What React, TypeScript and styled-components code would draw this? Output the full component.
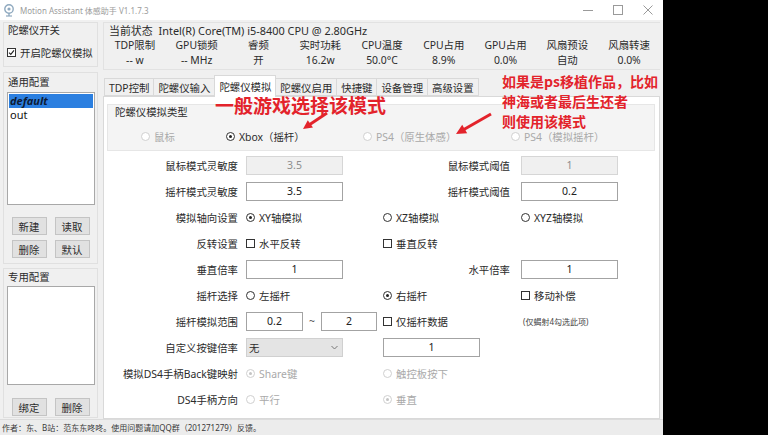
import React from 'react';
import styled, { createGlobalStyle } from 'styled-components';

const FONT = `"Noto Sans", "Noto Sans CJK SC", sans-serif`;

const Global = createGlobalStyle`
  html, body { margin: 0; padding: 0; background: #000; }
  body { font-family: ${FONT}; }
  * { box-sizing: border-box; }
`;

const Screen = styled.div`
  width: 768px;
  height: 435px;
  background: #000;
  display: flex;
  overflow: hidden;
`;

const Window = styled.div`
  position: relative;
  width: 663px;
  height: 435px;
  background: #f0f0f0;
  display: flex;
  flex-direction: column;
  font-family: ${FONT};
  font-size: 10.4px;
  color: #2b2b2b;
`;

const TitleBar = styled.div`
  height: 20px;
  flex-shrink: 0;
  background: #fff;
  display: flex;
  align-items: center;
  padding-left: 3px;
`;

const TitleText = styled.span`
  margin-left: 5px;
  font-size: 8px;
  color: #9c9c9c;
`;

const Controls = styled.div`
  margin-left: auto;
  display: flex;
`;

const CtrlBtn = styled.div`
  width: 30px;
  height: 20px;
  display: flex;
  align-items: center;
  justify-content: center;
`;

const Body = styled.div`
  flex: 1;
  min-height: 0;
  display: flex;
  gap: 5px;
  padding: 2px 3px 0 3px;
`;

const LeftCol = styled.div`
  width: 95px;
  flex-shrink: 0;
  display: flex;
  flex-direction: column;
`;

const Group = styled.div<{ $h: number; $mt: number }>`
  height: ${(p) => p.$h}px;
  margin-top: ${(p) => p.$mt}px;
  border: 1px solid #e0e0e0;
  display: flex;
  flex-direction: column;
`;

const GroupTitle = styled.div<{ $mt: number }>`
  margin-top: ${(p) => p.$mt}px;
  padding-left: 4px;
  line-height: 14px;
  height: 14px;
`;

const CheckRow = styled.div`
  margin-top: 7px;
  height: 16px;
  padding-left: 3px;
  display: flex;
  align-items: center;
`;

const ListBox = styled.div<{ $mt: number; $h: number }>`
  margin: ${(p) => p.$mt}px 0 0 3px;
  width: 88px;
  height: ${(p) => p.$h}px;
  background: #fff;
  border: 1px solid #a8a8a8;
  padding: 1px;
  font-size: 11px;
  color: #111;
`;

const ListItem = styled.div<{ $sel?: boolean }>`
  height: 14px;
  line-height: 14px;
  padding-left: 1px;
  background: ${(p) => (p.$sel ? '#2b7fe0' : 'transparent')};
  font-weight: ${(p) => (p.$sel ? 700 : 400)};
  font-style: ${(p) => (p.$sel ? 'italic' : 'normal')};
  color: ${(p) => (p.$sel ? '#0d1a33' : '#111')};
`;

const ButtonGrid = styled.div<{ $mt: number }>`
  margin-top: ${(p) => p.$mt}px;
  display: grid;
  grid-template-columns: 35px 35px;
  column-gap: 8px;
  row-gap: 5px;
  justify-content: center;
`;

const Btn = styled.div`
  height: 18px;
  background: #e1e1e1;
  border: 1px solid #c4c4c4;
  display: flex;
  align-items: center;
  justify-content: center;
`;

const RightCol = styled.div`
  flex: 1;
  min-width: 0;
  display: flex;
  flex-direction: column;
`;

const StatusBox = styled.div`
  height: 48px;
  border: 1px solid #e2e2e2;
  border-right: none;
  display: flex;
  flex-direction: column;
`;

const CpuLine = styled.div`
  height: 15px;
  line-height: 15px;
  padding-left: 5px;
  display: flex;
  gap: 6px;
  font-size: 10.9px;
`;

const StatGrid = styled.div`
  display: grid;
  grid-template-columns: repeat(9, 1fr);
  grid-auto-rows: 15px;
  line-height: 15px;
  text-align: center;
`;

const TabBar = styled.div`
  position: relative;
  z-index: 1;
  margin-top: 5px;
  height: 21px;
  display: flex;
  align-items: flex-end;
  padding-left: 2px;
`;

const Tab = styled.div<{ $sel?: boolean }>`
  height: ${(p) => (p.$sel ? 22 : 18)}px;
  margin-bottom: ${(p) => (p.$sel ? -1 : 0)}px;
  margin-left: -1px;
  padding: 0 4px;
  display: flex;
  align-items: center;
  padding-top: ${(p) => (p.$sel ? 0 : 1)}px;
  background: ${(p) => (p.$sel ? '#fff' : '#f0f0f0')};
  border: 1px solid #d9d9d9;
  border-bottom: ${(p) => (p.$sel ? 'none' : '1px solid #d9d9d9')};
  white-space: nowrap;
`;

const TabPanel = styled.div`
  flex: 1;
  min-height: 0;
  background: #fff;
  border: 1px solid #d9d9d9;
  padding: 7px 4px 0 3px;
  display: flex;
  flex-direction: column;
`;

const TypeGroup = styled.div`
  height: 47px;
  flex-shrink: 0;
  background: #f4f4f4;
  border: 1px solid #e6e6e6;
  display: flex;
  flex-direction: column;
`;

const TypeTitle = styled.div`
  padding-left: 7px;
  height: 14px;
  line-height: 14px;
`;

const TypeRow = styled.div`
  margin-top: 9px;
  height: 16px;
  padding-left: 33px;
  display: grid;
  grid-template-columns: 85px 137px 148px 1fr;
  align-items: center;
`;

const Form = styled.div`
  margin-top: 1px;
  display: grid;
  grid-template-columns: 131px 145px 138px 1fr;
  grid-auto-rows: 26px;
  align-items: center;
`;

const Label = styled.div`
  text-align: right;
  white-space: nowrap;
`;

const CellA = styled.div`
  padding-left: 8px;
  display: flex;
  align-items: center;
`;

const Cell = styled.div`
  display: flex;
  align-items: center;
`;

const RightLabel = styled.div`
  text-align: right;
  padding-right: 11px;
  white-space: nowrap;
`;

const Field = styled.div<{ $w: number; $dis?: boolean }>`
  width: ${(p) => p.$w}px;
  height: 19px;
  border: 1px solid ${(p) => (p.$dis ? '#d6d6d6' : '#a3a3a3')};
  background: ${(p) => (p.$dis ? '#f0f0f0' : '#fff')};
  color: ${(p) => (p.$dis ? '#8e8e8e' : '#222')};
  display: flex;
  align-items: center;
  justify-content: center;
  font-size: 10.5px;
`;

const RangeSep = styled.div`
  width: 18px;
  text-align: center;
  color: #555;
`;

const Select = styled.div`
  width: 97px;
  height: 19px;
  background: #e4e4e4;
  border: 1px solid #d0d0d0;
  display: flex;
  align-items: center;
  justify-content: space-between;
  padding: 0 4px 0 2px;
`;

const Note = styled.div`
  padding-left: 2px;
  font-size: 8px;
  color: #444;
`;

const Option = styled.div<{ $dis?: boolean }>`
  display: inline-flex;
  align-items: center;
  gap: 4px;
  white-space: nowrap;
  color: ${(p) => (p.$dis ? '#a9a9a9' : '#2b2b2b')};
`;

const RadioDot = styled.span<{ $on?: boolean; $dis?: boolean }>`
  width: 9px;
  height: 9px;
  border-radius: 50%;
  border: 1px solid ${(p) => (p.$dis ? '#d0d0d0' : '#333')};
  background: #fff;
  display: inline-flex;
  align-items: center;
  justify-content: center;
  flex-shrink: 0;
  &::after {
    content: '';
    width: 3px;
    height: 3px;
    border-radius: 50%;
    background: ${(p) => (p.$dis ? '#c4c4c4' : '#222')};
    display: ${(p) => (p.$on ? 'block' : 'none')};
  }
`;

const CheckBox = styled.span`
  width: 9px;
  height: 9px;
  border: 1px solid #333;
  background: #fff;
  flex-shrink: 0;
  display: inline-flex;
  align-items: center;
  justify-content: center;
`;

const StatusBar = styled.div`
  height: 16px;
  flex-shrink: 0;
  border-top: 1px solid #dcdcdc;
  background: #ececec;
  padding-left: 2px;
  font-size: 8px;
  line-height: 15px;
  color: #3a3a3a;
  white-space: nowrap;
`;

const Annot = styled.div<{ $x: number; $y: number; $size: number; $lh: number }>`
  position: absolute;
  left: ${(p) => p.$x}px;
  top: ${(p) => p.$y}px;
  font-family: "Noto Sans CJK SC", sans-serif;
  font-weight: 700;
  font-size: ${(p) => p.$size}px;
  line-height: ${(p) => p.$lh}px;
  color: #e3232b;
  white-space: nowrap;
  pointer-events: none;
`;

const ArrowLayer = styled.svg`
  position: absolute;
  left: 0;
  top: 0;
  pointer-events: none;
`;

const Radio = ({ label, on, dis }: { label: string; on?: boolean; dis?: boolean }) => (
  <Option $dis={dis}>
    <RadioDot $on={on} $dis={dis} />
    {label}
  </Option>
);

const Check = ({ label, on }: { label: string; on?: boolean }) => (
  <Option>
    <CheckBox>
      {on && (
        <svg width="7" height="7" viewBox="0 0 7 7">
          <polyline points="1,3.6 2.8,5.4 6,1.4" fill="none" stroke="#222" strokeWidth="1.1" />
        </svg>
      )}
    </CheckBox>
    {label}
  </Option>
);

const stats: [string, string][] = [
  ['TDP限制', '-- w'],
  ['GPU锁频', '-- MHz'],
  ['睿频', '开'],
  ['实时功耗', '16.2w'],
  ['CPU温度', '50.0°C'],
  ['CPU占用', '8.9%'],
  ['GPU占用', '0.0%'],
  ['风扇预设', '自动'],
  ['风扇转速', '0.0%'],
];

const tabs = ['TDP控制', '陀螺仪输入', '陀螺仪模拟', '陀螺仪启用', '快捷键', '设备管理', '高级设置'];

export default function App() {
  return (
    <Screen>
      <Global />
      <Window>
        <TitleBar>
          <svg width="12" height="13" viewBox="0 0 12 13">
            <circle cx="6" cy="5" r="4.2" fill="none" stroke="#8fa9bf" strokeWidth="1.4" />
            <circle cx="6" cy="5" r="1.6" fill="#8fa9bf" />
            <line x1="6" y1="9" x2="6" y2="12" stroke="#8fa9bf" strokeWidth="1.4" />
            <line x1="3" y1="12" x2="9" y2="12" stroke="#8fa9bf" strokeWidth="1.2" />
          </svg>
          <TitleText>Motion Assistant 体感助手 V1.1.7.3</TitleText>
          <Controls>
            <CtrlBtn>
              <svg width="10" height="10" viewBox="0 0 10 10">
                <line x1="0" y1="5.5" x2="10" y2="5.5" stroke="#9a9a9a" strokeWidth="1" />
              </svg>
            </CtrlBtn>
            <CtrlBtn>
              <svg width="10" height="10" viewBox="0 0 10 10">
                <rect x="0.5" y="0.5" width="9" height="9" fill="none" stroke="#9a9a9a" strokeWidth="1" />
              </svg>
            </CtrlBtn>
            <CtrlBtn>
              <svg width="10" height="10" viewBox="0 0 10 10">
                <path d="M0.5 0.5 L9.5 9.5 M9.5 0.5 L0.5 9.5" stroke="#9a9a9a" strokeWidth="1" />
              </svg>
            </CtrlBtn>
          </Controls>
        </TitleBar>

        <Body>
          <LeftCol>
            <Group $h={45} $mt={0}>
              <GroupTitle $mt={0}>陀螺仪开关</GroupTitle>
              <CheckRow>
                <Check label="开启陀螺仪模拟" on />
              </CheckRow>
            </Group>
            <Group $h={192} $mt={5}>
              <GroupTitle $mt={2}>通用配置</GroupTitle>
              <ListBox $mt={3} $h={113}>
                <ListItem $sel>default</ListItem>
                <ListItem>out</ListItem>
              </ListBox>
              <ButtonGrid $mt={12}>
                <Btn>新建</Btn>
                <Btn>读取</Btn>
                <Btn>删除</Btn>
                <Btn>默认</Btn>
              </ButtonGrid>
            </Group>
            <Group $h={150} $mt={4}>
              <GroupTitle $mt={1}>专用配置</GroupTitle>
              <ListBox $mt={2} $h={99} />
              <ButtonGrid $mt={13}>
                <Btn>绑定</Btn>
                <Btn>删除</Btn>
              </ButtonGrid>
            </Group>
          </LeftCol>

          <RightCol>
            <StatusBox>
              <CpuLine>
                <span>当前状态</span>
                <span>Intel(R) Core(TM) i5-8400 CPU @ 2.80GHz</span>
              </CpuLine>
              <StatGrid>
                {stats.map(([k]) => (
                  <div key={k}>{k}</div>
                ))}
                {stats.map(([k, v]) => (
                  <div key={k + 'v'}>{v}</div>
                ))}
              </StatGrid>
            </StatusBox>

            <TabBar>
              {tabs.map((t, i) => (
                <Tab key={t} $sel={i === 2}>
                  {t}
                </Tab>
              ))}
            </TabBar>

            <TabPanel>
              <TypeGroup>
                <TypeTitle>陀螺仪模拟类型</TypeTitle>
                <TypeRow>
                  <Radio label="鼠标" dis />
                  <Radio label="Xbox（摇杆）" on />
                  <Radio label="PS4（原生体感）" dis />
                  <Radio label="PS4（模拟摇杆）" dis />
                </TypeRow>
              </TypeGroup>

              <Form>
                <Label>鼠标模式灵敏度</Label>
                <CellA><Field $w={97} $dis>3.5</Field></CellA>
                <RightLabel>鼠标模式阈值</RightLabel>
                <Cell><Field $w={97} $dis>1</Field></Cell>

                <Label>摇杆模式灵敏度</Label>
                <CellA><Field $w={97}>3.5</Field></CellA>
                <RightLabel>摇杆模式阈值</RightLabel>
                <Cell><Field $w={97}>0.2</Field></Cell>

                <Label>模拟轴向设置</Label>
                <CellA><Radio label="XY轴模拟" on /></CellA>
                <Cell><Radio label="XZ轴模拟" /></Cell>
                <Cell><Radio label="XYZ轴模拟" /></Cell>

                <Label>反转设置</Label>
                <CellA><Check label="水平反转" /></CellA>
                <Cell><Check label="垂直反转" /></Cell>
                <Cell />

                <Label>垂直倍率</Label>
                <CellA><Field $w={97}>1</Field></CellA>
                <RightLabel>水平倍率</RightLabel>
                <Cell><Field $w={97}>1</Field></Cell>

                <Label>摇杆选择</Label>
                <CellA><Radio label="左摇杆" /></CellA>
                <Cell><Radio label="右摇杆" on /></Cell>
                <Cell><Check label="移动补偿" /></Cell>

                <Label>摇杆模拟范围</Label>
                <CellA>
                  <Field $w={57}>0.2</Field>
                  <RangeSep>~</RangeSep>
                  <Field $w={56}>2</Field>
                </CellA>
                <Cell><Check label="仅摇杆数据" /></Cell>
                <Note>(仅蝎射4勾选此项)</Note>

                <Label>自定义按键倍率</Label>
                <CellA>
                  <Select>
                    <span>无</span>
                    <svg width="7" height="5" viewBox="0 0 7 5">
                      <polyline points="0.5,1 3.5,4 6.5,1" fill="none" stroke="#777" strokeWidth="1" />
                    </svg>
                  </Select>
                </CellA>
                <Cell><Field $w={97}>1</Field></Cell>
                <Cell />

                <Label>模拟DS4手柄Back键映射</Label>
                <CellA><Radio label="Share键" on dis /></CellA>
                <Cell><Radio label="触控板按下" dis /></Cell>
                <Cell />

                <Label>DS4手柄方向</Label>
                <CellA><Radio label="平行" dis /></CellA>
                <Cell><Radio label="垂直" on dis /></Cell>
                <Cell />
              </Form>
            </TabPanel>
          </RightCol>
        </Body>

        <StatusBar>作者：东、B站：范东东咚咚。使用问题请加QQ群（201271279）反馈。</StatusBar>

        <Annot $x={215} $y={94} $size={19} $lh={22}>一般游戏选择该模式</Annot>
        <Annot $x={502} $y={71} $size={14} $lh={20}>
          如果是ps移植作品，比如
          <br />
          神海或者最后生还者
          <br />
          则使用该模式
        </Annot>
        <ArrowLayer width="663" height="435" viewBox="0 0 663 435">
          <line x1="327" y1="113" x2="309" y2="125" stroke="#e3232b" strokeWidth="3" />
          <polygon points="303,129 313,127.6 307.8,120.2" fill="#e3232b" />
          <line x1="491" y1="114" x2="463" y2="130" stroke="#e3232b" strokeWidth="3" />
          <polygon points="456,134 467.2,133.3 462.2,124.7" fill="#e3232b" />
        </ArrowLayer>
      </Window>
    </Screen>
  );
}
